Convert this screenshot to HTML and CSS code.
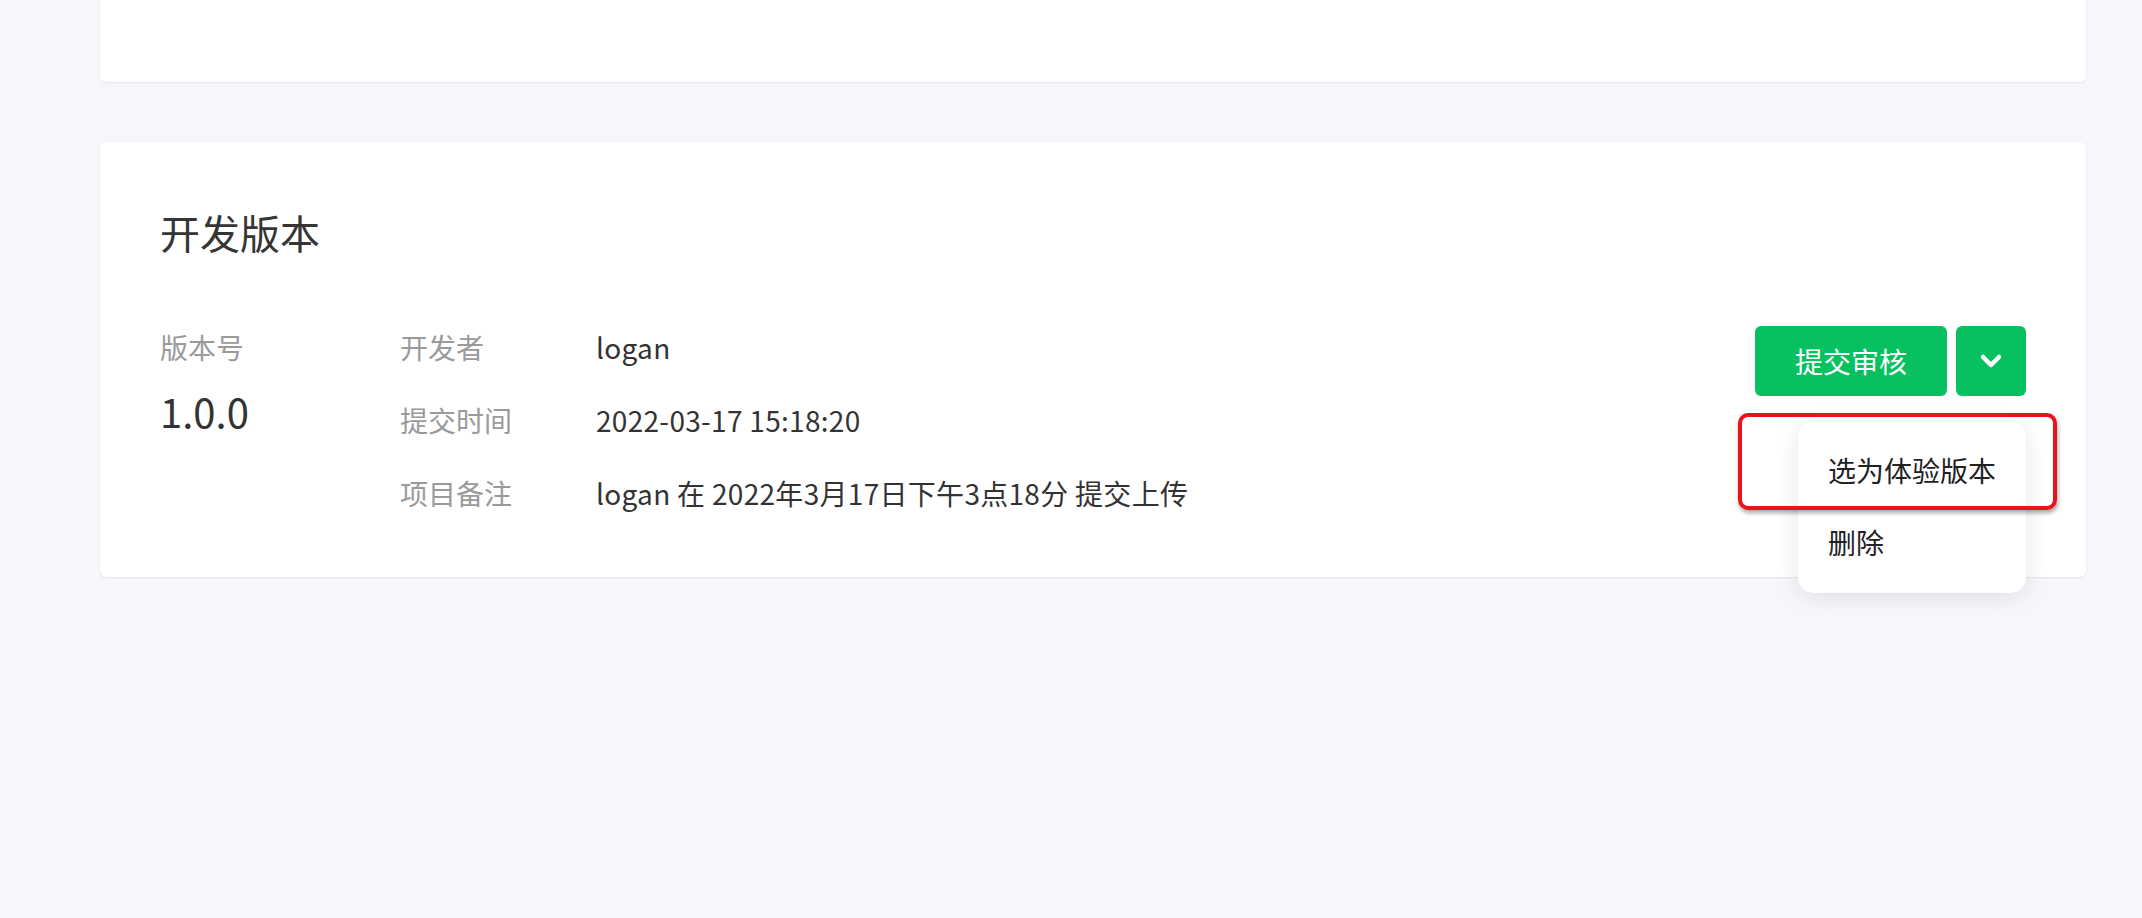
FILE: index.html
```html
<!DOCTYPE html>
<html lang="zh-CN">
<head>
<meta charset="utf-8">
<title>开发版本</title>
<link rel="stylesheet" href="styles.css">
</head>
<body>
<main class="page">
  <section class="card card-top"></section>
  <section class="card card-dev">
    <h2 class="card-title">开发版本</h2>
    <div class="dev-body">
      <div class="ver-col">
        <div class="ver-label">版本号</div>
        <div class="ver-value">1.0.0</div>
      </div>
      <dl class="meta">
        <dt>开发者</dt><dd>logan</dd>
        <dt>提交时间</dt><dd>2022-03-17 15:18:20</dd>
        <dt>项目备注</dt><dd>logan 在 2022年3月17日下午3点18分 提交上传</dd>
      </dl>
      <div class="actions">
        <button class="btn btn-primary">提交审核</button>
        <button class="btn btn-drop" aria-label="更多">
          <svg width="28" height="18" viewBox="0 0 28 18"><polyline points="6,5 14,13 22,5" fill="none" stroke="#fff" stroke-width="4.5" stroke-linecap="round" stroke-linejoin="round"/></svg>
        </button>
        <ul class="menu">
          <li class="menu-item">选为体验版本</li>
          <li class="menu-item">删除</li>
        </ul>
        <div class="highlight"></div>
      </div>
    </div>
  </section>
</main>
</body>
</html>
```

FILE: styles.css
```css
* { box-sizing: border-box; }
html, body {
  margin: 0;
  padding: 0;
  background: #f5f7fa;
  font-family: "Noto Sans CJK SC", "Noto Sans", sans-serif;
  color: #333;
}
.page {
  min-height: 100vh;
  padding: 0 56px 0 100px;
  display: flex;
  flex-direction: column;
  gap: 60px;
}
.card {
  background: #fff;
  border-radius: 6px;
  box-shadow: 0 1px 2px rgba(0, 0, 0, 0.08), 0 0 1px rgba(0, 0, 0, 0.04);
}
.card-top {
  height: 82px;
  flex: none;
  border-radius: 0 0 6px 6px;
}
.card-dev {
  position: relative;
  height: 435px;
  flex: none;
  padding: 62px 60px 0 60px;
}
.card-title {
  margin: 0;
  font-size: 40px;
  line-height: 56px;
  font-weight: 400;
  color: #353535;
}
.dev-body {
  margin-top: 65px;
  display: flex;
  align-items: flex-start;
}
.ver-col {
  width: 240px;
  flex: none;
}
.ver-label {
  font-size: 28px;
  line-height: 44px;
  color: #9a9a9a;
}
.ver-value {
  margin-top: 14px;
  font-size: 40px;
  line-height: 56px;
  color: #333;
}
.meta {
  margin: 0;
  display: grid;
  grid-template-columns: 196px auto;
  row-gap: 29px;
  font-size: 28px;
  line-height: 44px;
}
.meta dt { color: #9a9a9a; }
.meta dd { margin: 0; color: #333; letter-spacing: 0.3px; }
.actions {
  margin-left: auto;
  display: flex;
  gap: 9px;
  position: relative;
  margin-top: 1px;
}
.btn {
  border: 0;
  height: 70px;
  border-radius: 6px;
  background: #07c160;
  color: #fff;
  font-family: inherit;
  font-size: 28px;
  padding: 0;
  display: flex;
  align-items: center;
  justify-content: center;
}
.btn-primary { width: 192px; }
.btn-drop { width: 70px; }
.btn-drop svg { display: block; }
.menu {
  position: absolute;
  z-index: 10;
  top: 96px;
  right: 0;
  width: 228px;
  height: 171px;
  margin: 0;
  padding: 12px 0 15px;
  list-style: none;
  background: #fff;
  border-radius: 15px;
  box-shadow: 0 4px 22px rgba(0, 0, 0, 0.1);
}
.menu-item {
  height: 72px;
  line-height: 72px;
  padding: 0 30px;
  white-space: nowrap;
  font-size: 28px;
  color: #222;
}
.highlight {
  position: absolute;
  z-index: 11;
  top: 87px;
  right: -31px;
  width: 319px;
  height: 97px;
  border: 4px solid #e8131b;
  border-radius: 10px;
  box-shadow: 1px 3px 4px rgba(0, 0, 0, 0.35);
}
```
